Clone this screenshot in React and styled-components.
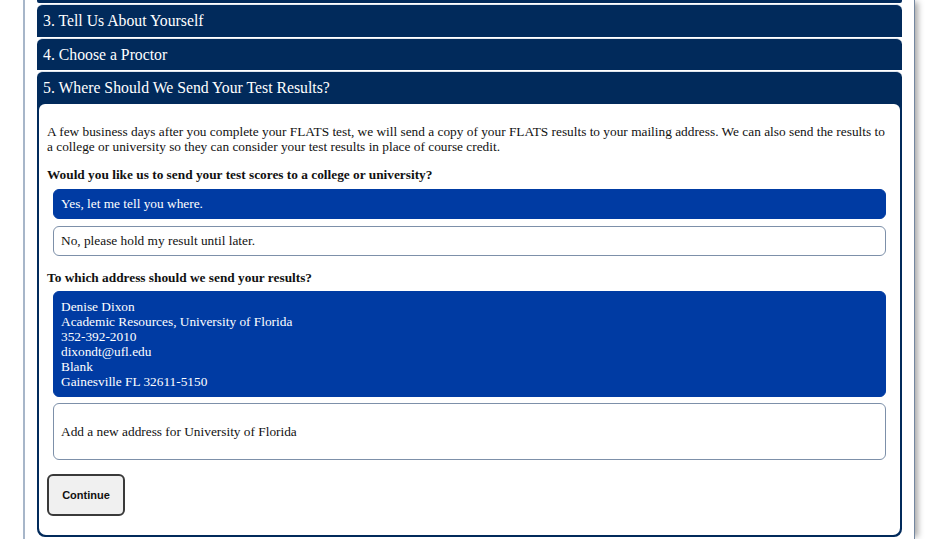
import styled, { createGlobalStyle } from "styled-components"

const GlobalStyle = createGlobalStyle`
    html, body {
        margin: 0;
        padding: 0;
        background: #fff;
    }
    body {
        font-family: "Liberation Serif", "Times New Roman", serif;
        color: #111;
        overflow: hidden;
    }
`

const Page = styled.div`
    width: 892px;
    min-height: 539px;
    margin-left: 23px;
    padding: 0 12px;
    box-sizing: border-box;
    background: #fff;
    border-left: 2px solid #a7b6c9;
    border-right: 1px solid #7487a0;
    box-shadow: 5px 0 6px -2px rgba(0, 0, 0, 0.35);
`

const Accordion = styled.div`
    display: flex;
    flex-direction: column;
`

const HeaderTail = styled.div`
    height: 3px;
    background: #012a5b;
    border-radius: 0 0 2px 2px;
`

const Header = styled.div`
    margin-top: 1px;
    background: #012a5b;
    color: #fff;
    font-size: 15.75px;
    line-height: 18px;
    padding: 7px 6px 6.5px;
    border-top: 1px solid #dfe6ee;
    border-radius: 6px 6px 0 0;
`

const Panel = styled.div`
    background: #012a5b;
    padding: 0 2px 2px;
    border-radius: 0 0 8px 8px;
`

const PanelBody = styled.div`
    background: #fff;
    border-radius: 6px 6px 7px 7px;
    padding: 8px 8px 19px;
    display: flex;
    flex-direction: column;
    font-size: 13.33px;
    line-height: 15px;
`

const Intro = styled.p`
    margin: 12px 0 0;
`

const Question = styled.div`
    font-weight: bold;
    margin-top: ${(p) => p.$top}px;
`

const Choice = styled.div`
    margin: ${(p) => p.$top}px 6px 0;
    padding: ${(p) => p.$pad};
    line-height: 15px;
    border: 1px solid ${(p) => (p.$selected ? "#003ba3" : "#7d90a9")};
    border-radius: 6px;
    background: ${(p) => (p.$selected ? "#003ba3" : "#fff")};
    color: ${(p) => (p.$selected ? "#fff" : "#111")};
`

const ContinueButton = styled.button`
    align-self: flex-start;
    margin-top: 14px;
    width: 78px;
    height: 42px;
    background: #f0f0f0;
    border: 2px solid #3a3a3a;
    border-radius: 6px;
    font-family: "Liberation Sans", Arial, sans-serif;
    font-weight: bold;
    font-size: 11px;
    color: #111;
    cursor: pointer;
`

const addressLines = [
    "Denise Dixon",
    "Academic Resources, University of Florida",
    "352-392-2010",
    "dixondt@ufl.edu",
    "Blank",
    "Gainesville FL 32611-5150",
]

export default function App() {
    return (
        <>
            <GlobalStyle />
            <Page>
                <Accordion>
                    <HeaderTail />
                    <Header>3. Tell Us About Yourself</Header>
                    <Header>4. Choose a Proctor</Header>
                    <Header>5. Where Should We Send Your Test Results?</Header>
                    <Panel>
                        <PanelBody>
                            <Intro>
                                A few business days after you complete your FLATS test, we will send a copy of your FLATS results to your mailing address. We can also send the results to a college or university so they can consider your test results in place of course credit.
                            </Intro>
                            <Question $top={13}>Would you like us to send your test scores to a college or university?</Question>
                            <Choice $top={7} $pad="6.5px 7px" $selected>Yes, let me tell you where.</Choice>
                            <Choice $top={7} $pad="6.5px 7px">No, please hold my result until later.</Choice>
                            <Question $top={14}>To which address should we send your results?</Question>
                            <Choice $top={6} $pad="7px 7px" $selected>
                                {addressLines.map((line) => (
                                    <div key={line}>{line}</div>
                                ))}
                            </Choice>
                            <Choice $top={6} $pad="20px 7px">Add a new address for University of Florida</Choice>
                            <ContinueButton type="button">Continue</ContinueButton>
                        </PanelBody>
                    </Panel>
                </Accordion>
            </Page>
        </>
    )
}
